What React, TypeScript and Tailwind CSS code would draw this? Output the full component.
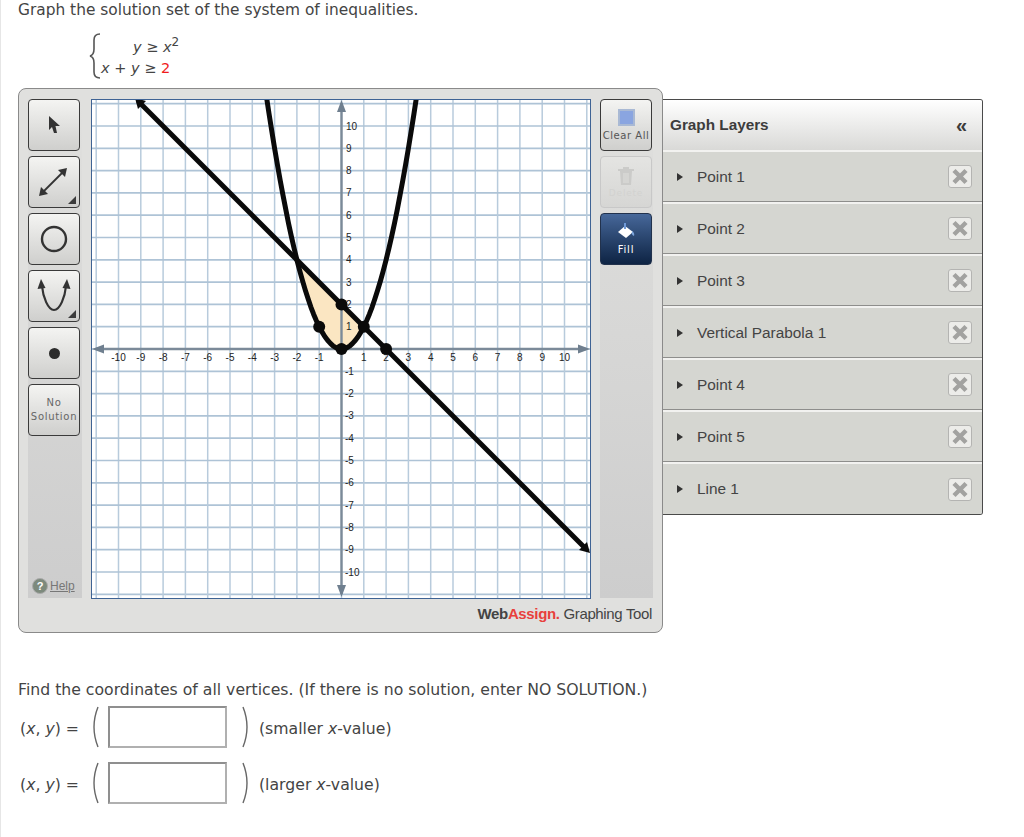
import React from "react";

const U = 22.3;
const CX = 341.5;
const CY = 349;
const px = (x: number) => CX + x * U;
const py = (y: number) => CY - y * U;
const ticks = Array.from({ length: 23 }, (_, i) => i - 11);

const curve = (from: number, to: number, step = 0.125) => {
  const pts: string[] = [];
  for (let x = from; x <= to + 0.001; x += step) pts.push(`${px(x).toFixed(1)},${py(x * x).toFixed(1)}`);
  return pts;
};

function Graph() {
  const fill = [...curve(-2, 1), `${px(-2)},${py(4)}`].join(" ");
  const points: [number, number][] = [[-1, 1], [0, 0], [0, 2], [1, 1], [2, 0]];
  return (
    <svg width="500" height="500" viewBox="91 99 500 500" className="block shrink-0 bg-white">
      {ticks.map((t) => (
        <g key={t}>
          <line x1={px(t)} x2={px(t)} y1="99" y2="599" stroke="#b8cbdc" strokeWidth="1.5" />
          <line x1="91" x2="591" y1={py(t)} y2={py(t)} stroke="#aec3d6" strokeWidth="1.7" />
        </g>
      ))}
      <polygon points={fill} fill="#fbe6c2" />
      <line x1="96" x2="586" y1={CY} y2={CY} stroke="#7b8a99" strokeWidth="2.4" />
      <line x1={CX} x2={CX} y1="103" y2="594" stroke="#7b8a99" strokeWidth="2.4" />
      <polygon points={`92,${CY} 104,${CY - 4.5} 104,${CY + 4.5}`} fill="#6f7f8f" />
      <polygon points={`590,${CY} 578,${CY - 4.5} 578,${CY + 4.5}`} fill="#6f7f8f" />
      <polygon points={`${CX},100 ${CX - 4.5},112 ${CX + 4.5},112`} fill="#6f7f8f" />
      <polygon points={`${CX},597 ${CX - 4.5},585 ${CX + 4.5},585`} fill="#6f7f8f" />
      <g fontFamily="'Liberation Sans', sans-serif" fontSize="10" fill="#222">
        {ticks.filter((t) => t !== 0 && Math.abs(t) <= 10).map((t) => (
          <text key={`x${t}`} x={px(t)} y="361" textAnchor="middle">{t}</text>
        ))}
        {ticks.filter((t) => t !== 0 && Math.abs(t) <= 10).map((t) => (
          <text key={`y${t}`} x={t < 0 ? 345 : 346} y={py(t) + 3.5}>{t}</text>
        ))}
      </g>
      <polyline points={curve(-3.375, 3.375).join(" ")} fill="none" stroke="#0a0a0a" strokeWidth="5" strokeLinejoin="round" />
      <line x1="138" y1="101" x2="586" y2="549" stroke="#0a0a0a" strokeWidth="5" />
      <polygon points="135,98 146,101 138,109" fill="#0a0a0a" />
      <polygon points="590,553 579,550 587,542" fill="#0a0a0a" />
      {points.map(([x, y]) => (
        <circle key={`${x}${y}`} cx={px(x)} cy={py(y)} r="6" fill="#0a0a0a" />
      ))}
      <rect x="91.5" y="99.5" width="499" height="499" fill="none" stroke="#3f6394" strokeWidth="1" />
    </svg>
  );
}

function ToolButton({ children, className = "border-[#3a3a3a] from-[#f4f4f2] to-[#cfcfcd]" }: { children?: React.ReactNode; className?: string }) {
  return (
    <div className={`relative flex h-[52px] w-[52px] flex-col items-center justify-center rounded-[4px] border bg-gradient-to-b ${className}`}>
      {children}
    </div>
  );
}

const Corner = () => (
  <svg width="8" height="8" viewBox="0 0 8 8" className="absolute bottom-[3px] right-[3px]">
    <polygon points="8,0 8,8 0,8" fill="#3c3c3c" />
  </svg>
);

function LeftTools() {
  return (
    <div className="flex h-[499px] w-[54px] shrink-0 flex-col gap-[5px] bg-gradient-to-b from-[#e0e0de] to-[#cdcdcd]">
      <ToolButton>
        <svg width="16" height="20" viewBox="0 0 16 20">
          <polygon points="3,1 14,11 9.5,11 11,18 8,18 6,12 3,15" fill="#333" />
        </svg>
      </ToolButton>
      <ToolButton>
        <svg width="32" height="32" viewBox="0 0 32 32" className="-translate-x-px">
          <line x1="6" y1="26" x2="26" y2="6" stroke="#333" strokeWidth="1.8" />
          <polygon points="30,2 28,11 21,4" fill="#333" />
          <polygon points="2,30 4,21 11,28" fill="#333" />
        </svg>
        <Corner />
      </ToolButton>
      <ToolButton>
        <svg width="30" height="30" viewBox="0 0 30 30">
          <circle cx="15" cy="15" r="12" fill="none" stroke="#333" strokeWidth="2.4" />
        </svg>
      </ToolButton>
      <ToolButton>
        <svg width="36" height="38" viewBox="0 0 36 38">
          <path d="M6 9 C7 20 12 33 18 33 C24 33 29 20 30 9" fill="none" stroke="#333" strokeWidth="2.2" />
          <polygon points="5,2 9.5,11 1.5,12" fill="#333" />
          <polygon points="31,2 34.5,12 26.5,11" fill="#333" />
        </svg>
        <Corner />
      </ToolButton>
      <ToolButton>
        <div className="h-[11px] w-[11px] rounded-full bg-[#2c2c2c]" />
      </ToolButton>
      <ToolButton className="border-[#3a3a3a] from-[#f4f4f2] to-[#cfcfcd] font-['DejaVu_Sans',sans-serif] text-[10px] leading-[14px] tracking-[0.7px] text-[#666]">
        <span>No</span>
        <span>Solution</span>
      </ToolButton>
      <div className="mt-auto mb-[3px] flex items-center gap-[2px] pl-[4px]">
        <svg width="16" height="16" viewBox="0 0 16 16">
          <circle cx="8" cy="8" r="7.5" fill="#7d8a7d" stroke="#aaa" />
          <text x="8" y="12" textAnchor="middle" fontSize="11" fontWeight="700" fill="#fff" fontFamily="'Liberation Sans', sans-serif">?</text>
        </svg>
        <span className="font-['Liberation_Sans',sans-serif] text-[12px] text-[#777] underline">Help</span>
      </div>
    </div>
  );
}

function RightTools() {
  return (
    <div className="flex h-[499px] w-[53px] shrink-0 flex-col gap-[5px] bg-gradient-to-b from-[#e0e0de] to-[#cdcdcd]">
      <ToolButton>
        <div className="mt-[1px] h-[17px] w-[17px] border-2 border-[#a9b9d4] bg-[#8aa5e0]" />
        <span className="mt-[3px] whitespace-nowrap font-['DejaVu_Sans',sans-serif] text-[10px] leading-[14px] tracking-[0.55px] text-[#555]">Clear All</span>
      </ToolButton>
      <ToolButton className="border-[#c8c8c8] from-[#e4e4e2] to-[#d6d6d4]">
        <svg width="20" height="20" viewBox="0 0 20 20">
          <path d="M4 5 H16 L15 19 H5 Z M2 3 H18 V5 H2 Z M7 1 H13 V3 H7 Z" fill="#cbcbc9" />
          <path d="M8 7 V17 M10 7 V17 M12 7 V17" stroke="#e4e4e2" strokeWidth="0.8" />
        </svg>
        <span className="mt-[2px] font-['DejaVu_Sans',sans-serif] text-[9px] leading-[11px] tracking-[0.8px] text-[#d2d2d0]">Delete</span>
      </ToolButton>
      <ToolButton className="border-[#22324d] from-[#47689a] to-[#0e2444]">
        <svg width="20" height="18" viewBox="0 0 20 18">
          <polygon points="2,9 9,3 17,9 10,15" fill="#fff" />
          <path d="M9 0 V6" stroke="#6f9ad8" strokeWidth="2" />
          <path d="M16 8 Q19 10 18 13 Q15 12 16 8" fill="#7ea6dc" />
        </svg>
        <span className="mt-[3px] font-['DejaVu_Sans',sans-serif] text-[10px] leading-[12px] tracking-[0.8px] text-white">Fill</span>
      </ToolButton>
    </div>
  );
}

function Layers() {
  const rows = ["Point 1", "Point 2", "Point 3", "Vertical Parabola 1", "Point 4", "Point 5", "Line 1"];
  return (
    <div className="mt-[11px] w-[320px] shrink-0 overflow-hidden rounded-r-[3px] border border-l-0 border-[#4a4a4a] font-['Liberation_Sans',sans-serif]">
      <div className="flex h-[50px] items-center justify-between bg-gradient-to-b from-[#ffffff] to-[#d9d9d7] pl-[7px] pr-[15px]">
        <span className="text-[15.3px] font-bold text-[#3c3c3c]">Graph Layers</span>
        <span className="text-[20px] font-bold leading-none text-[#3c3c3c]">«</span>
      </div>
      {rows.map((r) => (
        <div key={r} className="flex h-[52px] items-center border-t-2 border-b border-t-[#f2f2f0] border-b-[#8e8e8c] bg-[#d5d6d1] pl-[14px] pr-[10px] last:border-b-0">
          <svg width="6" height="8" viewBox="0 0 6 8" className="shrink-0">
            <polygon points="0,0 6,4 0,8" fill="#333" />
          </svg>
          <span className="ml-[14px] flex-1 text-[15.4px] text-[#444]">{r}</span>
          <div className="flex h-[23px] w-[24px] items-center justify-center rounded-[3px] border border-[#b4b4b2] bg-[#ecece9]">
            <svg width="18" height="17" viewBox="0 0 18 17">
              <path d="M3 2.5 L15 14.5 M15 2.5 L3 14.5" stroke="#a2a2a0" strokeWidth="4.4" />
            </svg>
          </div>
        </div>
      ))}
    </div>
  );
}

function Paren({ right = false }: { right?: boolean }) {
  return (
    <svg width="10" height="42" viewBox="0 0 10 42" className="shrink-0">
      <path d={right ? "M2 1 Q10 21 2 41" : "M8 1 Q0 21 8 41"} fill="none" stroke="#666" strokeWidth="1.4" />
    </svg>
  );
}

function Answer({ hint, className = "" }: { hint: React.ReactNode; className?: string }) {
  return (
    <div className={`flex h-[42px] items-center ${className}`}>
      <span className="ml-[2px] w-[70px] shrink-0 whitespace-nowrap pt-[3px]">(<i>x</i>, <i>y</i>) =</span>
      <Paren />
      <div className="ml-[8px] h-[42px] w-[119px] shrink-0 border-2 border-t-[#8f8f8f] border-l-[#8f8f8f] border-r-[#b0b0b0] border-b-[#b0b0b0] bg-white" />
      <div className="ml-[14px]"><Paren right /></div>
      <span className="ml-[8px] whitespace-nowrap pt-[3px]">{hint}</span>
    </div>
  );
}

export default function App() {
  return (
    <div className="h-[837px] w-[1024px] overflow-hidden border-l border-l-[#e6e6e6] bg-white pl-[17px] font-['DejaVu_Sans',sans-serif] text-[15.7px] text-[#444]">
      <p className="pt-[1px] text-[15.4px] leading-[18px]">Graph the solution set of the system of inequalities.</p>
      <div className="mt-[13px] flex h-[48px] items-center pl-[71px]">
        <svg width="12" height="46" viewBox="0 0 12 46" className="shrink-0">
          <path d="M11 1 Q5 1 5 7 V16 Q5 22 1 23 Q5 24 5 30 V39 Q5 45 11 45" fill="none" stroke="#555" strokeWidth="1.6" />
        </svg>
        <div className="flex translate-y-[2px] flex-col text-[14.5px] leading-[21px]">
          <span className="ml-[32px] whitespace-nowrap"><i>y</i> ≥ <i>x</i><sup className="text-[12px]">2</sup></span>
          <span className="whitespace-nowrap"><i>x</i> + <i>y</i> ≥ <span className="text-[#f01c1c]">2</span></span>
        </div>
      </div>
      <div className="mt-[8px] flex items-start">
        <div className="h-[545px] w-[645px] shrink-0 rounded-[8px] border border-[#8a8a8a] bg-[#e0e0de] pl-[9px] pt-[10px]">
          <div className="flex items-start">
            <LeftTools />
            <div className="ml-[9px]"><Graph /></div>
            <div className="ml-[9px]"><RightTools /></div>
          </div>
          <p className="mt-[6px] pr-[10px] text-right font-['Liberation_Sans',sans-serif] text-[15px] leading-[18px] tracking-[-0.35px] text-[#444]">
            <b>Web</b><b className="text-[#e8403c]">Assign.</b> Graphing Tool
          </p>
        </div>
        <Layers />
      </div>
      <p className="mt-[48px] leading-[18px]">Find the coordinates of all vertices. (If there is no solution, enter NO SOLUTION.)</p>
      <Answer className="mt-[7px]" hint={<>(smaller <i>x</i>-value)</>} />
      <Answer className="mt-[14px]" hint={<>(larger <i>x</i>-value)</>} />
    </div>
  );
}
